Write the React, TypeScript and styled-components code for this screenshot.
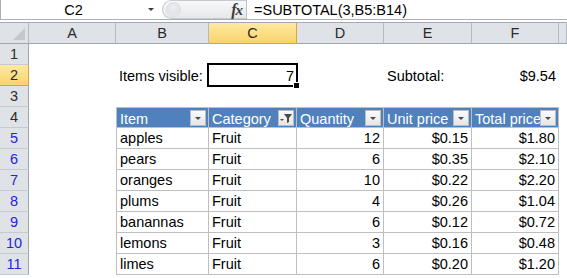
import React from 'react';
import styled, { createGlobalStyle, css } from 'styled-components';

const GlobalStyle = createGlobalStyle`
    html, body {
        margin: 0;
        padding: 0;
        background: #ffffff;
    }
    body {
        font-family: "Liberation Sans", Arial, sans-serif;
    }
`;

const COLS = ['A', 'B', 'C', 'D', 'E', 'F', ''];

const fruits = [
    { n: 5, item: 'apples', qty: 12, unit: '$0.15', total: '$1.80' },
    { n: 6, item: 'pears', qty: 6, unit: '$0.35', total: '$2.10' },
    { n: 7, item: 'oranges', qty: 10, unit: '$0.22', total: '$2.20' },
    { n: 8, item: 'plums', qty: 4, unit: '$0.26', total: '$1.04' },
    { n: 9, item: 'banannas', qty: 6, unit: '$0.12', total: '$0.72' },
    { n: 10, item: 'lemons', qty: 3, unit: '$0.16', total: '$0.48' },
    { n: 11, item: 'limes', qty: 6, unit: '$0.20', total: '$1.20' },
];

const headers = [
    { label: 'Item', filtered: false },
    { label: 'Category', filtered: true },
    { label: 'Quantity', filtered: false },
    { label: 'Unit price', filtered: false },
    { label: 'Total price', filtered: false },
];

const DropArrow = () => (
    <svg width="14" height="14" viewBox="0 0 14 14">
        <polygon points="4,6 10,6 7,9" fill="#4a4a4a" />
    </svg>
);

const FilterIcon = () => (
    <svg width="14" height="14" viewBox="0 0 14 14">
        <polygon points="1,8 5,8 3,10" fill="#4a4a4a" />
        <polygon points="5,3 13,3 10,7 10,11 8,12 8,7" fill="#4a4a4a" />
    </svg>
);

const App = () => {
    return (
        <>
            <GlobalStyle />
            <Window>
                <FormulaBar>
                    <NameBox>C2</NameBox>
                    <NameArrow />
                    <Grip>
                        <Knob />
                        <Fx>
                            <i>f</i>x
                        </Fx>
                    </Grip>
                    <FormulaInput>=SUBTOTAL(3,B5:B14)</FormulaInput>
                </FormulaBar>
                <Gap />
                <Sheet>
                    <Corner>
                        <CornerMark />
                    </Corner>
                    {COLS.map((c, i) => (
                        <ColHeader key={i} $active={c === 'C'}>
                            {c}
                        </ColHeader>
                    ))}

                    <RowHeader>1</RowHeader>
                    {COLS.map((_, i) => (
                        <Cell key={i} />
                    ))}

                    <RowHeader $active>2</RowHeader>
                    <Cell />
                    <Cell>Items visible:</Cell>
                    <Cell $right>
                        7
                        <Selection>
                            <FillHandle />
                        </Selection>
                    </Cell>
                    <Cell />
                    <Cell>Subtotal:</Cell>
                    <Cell $right>$9.54</Cell>
                    <Cell />

                    <RowHeader>3</RowHeader>
                    {COLS.map((_, i) => (
                        <Cell key={i} />
                    ))}

                    <RowHeader>4</RowHeader>
                    <Cell />
                    {headers.map((h, i) => (
                        <HeadCell key={h.label} $first={i === 0}>
                            <HeadLabel>{h.label}</HeadLabel>
                            <DropButton>{h.filtered ? <FilterIcon /> : <DropArrow />}</DropButton>
                        </HeadCell>
                    ))}
                    <Cell />

                    {fruits.map((f) => (
                        <React.Fragment key={f.n}>
                            <RowHeader $filtered>{f.n}</RowHeader>
                            <Cell />
                            <Cell $table $first>
                                {f.item}
                            </Cell>
                            <Cell $table>Fruit</Cell>
                            <Cell $table $right>
                                {f.qty}
                            </Cell>
                            <Cell $table $right>
                                {f.unit}
                            </Cell>
                            <Cell $table $right>
                                {f.total}
                            </Cell>
                            <Cell />
                        </React.Fragment>
                    ))}
                </Sheet>
            </Window>
        </>
    );
};

export default App;

const Window = styled.div`
    width: 567px;
    height: 278px;
    overflow: hidden;
    background: #ffffff;
`;

const FormulaBar = styled.div`
    display: flex;
    align-items: stretch;
    height: 20px;
    box-sizing: border-box;
    border-bottom: 1px solid #a9b0ba;
    font-size: 14.5px;
    color: #000;
`;

const NameBox = styled.div`
    width: 144px;
    box-sizing: border-box;
    border-left: 1px solid #a9b0ba;
    display: flex;
    align-items: center;
    justify-content: center;
    padding-left: 2px;
`;

const NameArrow = styled.div`
    width: 0;
    height: 0;
    margin: 8px 8px 0 4px;
    border-left: 3px solid transparent;
    border-right: 3px solid transparent;
    border-top: 3px solid #3a3a3a;
`;

const Grip = styled.div`
    flex: 0 0 84px;
    display: flex;
    align-items: center;
    justify-content: space-between;
    box-sizing: border-box;
    border: 1px solid #c7cbd1;
    border-right: none;
    border-radius: 10px 0 0 10px;
    background: linear-gradient(#f7f8f9, #e6e8eb);
    padding: 0 4px 0 3px;
`;

const Knob = styled.div`
    width: 13px;
    height: 13px;
    border-radius: 50%;
    border: 1px solid #dcdfe3;
    background: radial-gradient(circle at 50% 35%, #eceef0 0, #e0e3e7 60%, #f4f5f6 100%);
`;

const Fx = styled.span`
    font-family: "Liberation Serif", "Times New Roman", serif;
    font-style: italic;
    font-weight: bold;
    font-size: 15px;
    color: #3a3a3a;
    letter-spacing: -1px;

    i {
        font-size: 16px;
    }
`;

const FormulaInput = styled.div`
    flex: 1;
    display: flex;
    align-items: center;
    border-left: 1px solid #c0c4ca;
    padding-left: 7px;
`;

const Gap = styled.div`
    height: 2px;
    background: #ffffff;
`;

const Sheet = styled.div`
    display: grid;
    grid-template-columns: 29px 87px 93px 88px 87px 88px 87px 1fr;
    grid-auto-rows: 21px;
    border-top: 1px solid #a3abb5;
    font-size: 14.5px;
    color: #000;
`;

const headerActive = css`
    background: linear-gradient(#fde9a0, #f9d46c);
    border-color: #e2a23a;
`;

const Corner = styled.div`
    position: relative;
    background: #dfe3e8;
    border-right: 1px solid #b3bac4;
    border-bottom: 1px solid #9da6b1;
`;

const CornerMark = styled.div`
    position: absolute;
    right: 3px;
    bottom: 3px;
    width: 0;
    height: 0;
    border-left: 12px solid transparent;
    border-bottom: 12px solid #c4c8ce;
`;

const ColHeader = styled.div<{ $active?: boolean }>`
    display: flex;
    align-items: center;
    justify-content: center;
    box-sizing: border-box;
    background: #dfe3e8;
    border-right: 1px solid #b3bac4;
    border-bottom: 1px solid #9da6b1;
    color: #2a2a2a;
    font-size: 14.5px;
    ${(p) => p.$active && headerActive}
`;

const RowHeader = styled.div<{ $active?: boolean; $filtered?: boolean }>`
    display: flex;
    align-items: center;
    justify-content: center;
    box-sizing: border-box;
    background: #dfe3e8;
    border-right: 1px solid #9da6b1;
    border-bottom: 1px solid #c6cbd2;
    color: ${(p) => (p.$filtered ? '#2323dc' : '#2a2a2a')};
    font-size: 14.5px;
    ${(p) => p.$active && headerActive}
`;

const Cell = styled.div<{ $right?: boolean; $table?: boolean; $first?: boolean }>`
    position: relative;
    display: flex;
    align-items: flex-end;
    justify-content: ${(p) => (p.$right ? 'flex-end' : 'flex-start')};
    box-sizing: border-box;
    padding: 0 3px 2px 3px;
    line-height: 16px;
    white-space: nowrap;
    ${(p) =>
        p.$table &&
        css`
            border-right: 1px solid #bfbfbf;
            border-bottom: 1px solid #bfbfbf;
        `}
    ${(p) => p.$first && 'border-left: 1px solid #bfbfbf;'}
`;

const HeadCell = styled.div<{ $first?: boolean }>`
    display: flex;
    align-items: center;
    box-sizing: border-box;
    background: #4f81bd;
    color: #ffffff;
    padding: 0 2px 0 3px;
    border-top: 1px solid #bfbfbf;
    border-right: 1px solid #bfbfbf;
    border-bottom: 1px solid #bfbfbf;
    ${(p) => p.$first && 'border-left: 1px solid #bfbfbf;'}
`;

const HeadLabel = styled.span`
    flex: 1;
    min-width: 0;
    white-space: nowrap;
    overflow: visible;
    padding-top: 2px;
`;

const DropButton = styled.span`
    flex: 0 0 auto;
    width: 16px;
    height: 16px;
    box-sizing: border-box;
    display: flex;
    align-items: center;
    justify-content: center;
    background: linear-gradient(#fbfbfb, #e4e6e9);
    border: 1px solid #b8bdc4;
`;

const Selection = styled.div`
    position: absolute;
    inset: -2px -1px -1px -2px;
    border: 2px solid #000000;
    pointer-events: none;
`;

const FillHandle = styled.div`
    position: absolute;
    right: -4px;
    bottom: -4px;
    width: 5px;
    height: 5px;
    background: #000000;
    border: 1px solid #ffffff;
`;
